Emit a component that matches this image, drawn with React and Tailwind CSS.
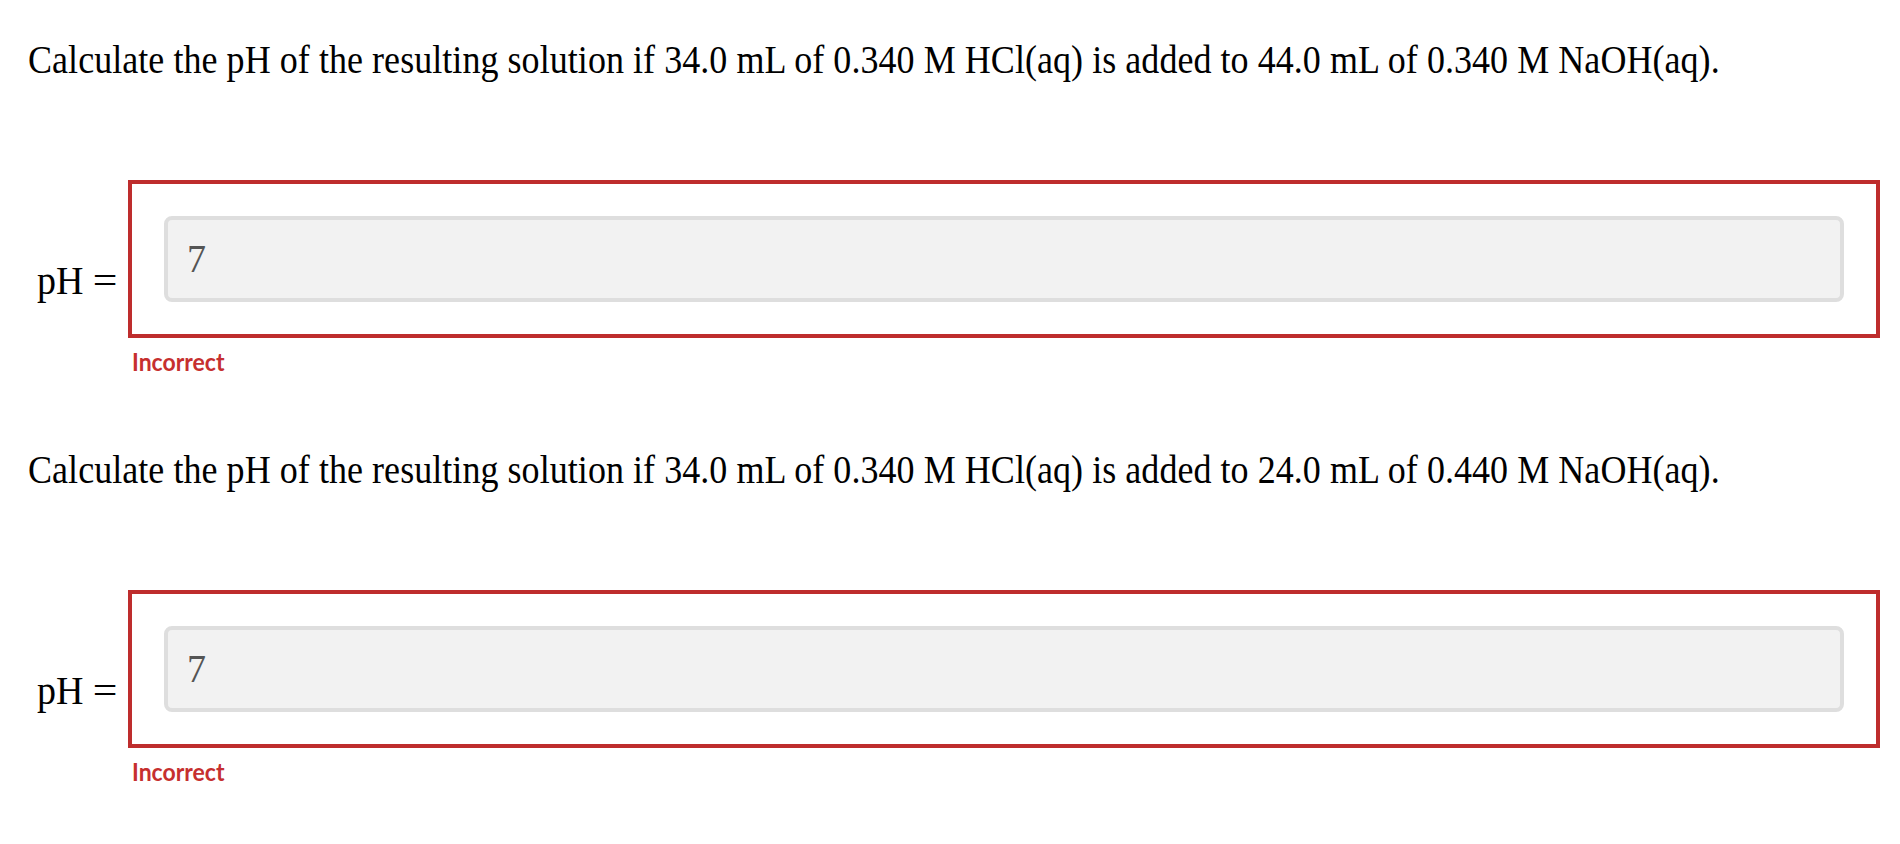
import React from "react";

const serif = { fontFamily: '"Liberation Serif", "Times New Roman", serif' };

function Question({ text, value, first }) {
  return (
    <div className={first ? "pt-[38px]" : "pt-[72px]"}>
      <p
        className="text-[36px] leading-[44px] tracking-[0.05px] text-black whitespace-nowrap origin-center scale-y-[1.1]"
        style={serif}
      >
        {text}
      </p>
      <div className="mt-[98px] flex items-start">
        <div
          className="w-[100px] shrink-0 pr-[11px] mt-[82px] flex justify-end text-[38px] leading-[36px] text-black origin-center scale-y-[1.05]"
          style={serif}
        >
          <span>pH</span>
          <span className="ml-[12px] inline-block scale-x-[1.15] origin-right">=</span>
        </div>
        <div className="flex-1 flex flex-col">
          <div className="border-4 border-[#be2d2d] px-8 py-8">
            <div className="h-[86px] rounded-lg border-4 border-[#dedede] bg-[#f2f2f2] flex items-center pl-[19px]">
              <span
                className="text-[38px] leading-none text-[#555555] -mt-[3px] inline-block scale-y-[1.05]"
                style={serif}
              >
                {value}
              </span>
            </div>
          </div>
          <div
            className="mt-[10px] pl-1 text-[23px] leading-[28px] font-bold text-[#c62f2f] origin-left scale-y-[1.05]"
            style={{ fontFamily: 'Lato, "Open Sans", sans-serif' }}
          >
            Incorrect
          </div>
        </div>
      </div>
    </div>
  );
}

export default function App() {
  return (
    <div className="min-h-[844px] w-[1900px] bg-white pl-[28px] pr-[20px]">
      <Question
        first
        text="Calculate the pH of the resulting solution if 34.0 mL of 0.340 M HCl(aq) is added to 44.0 mL of 0.340 M NaOH(aq)."
        value="7"
      />
      <Question
        text="Calculate the pH of the resulting solution if 34.0 mL of 0.340 M HCl(aq) is added to 24.0 mL of 0.440 M NaOH(aq)."
        value="7"
      />
    </div>
  );
}
